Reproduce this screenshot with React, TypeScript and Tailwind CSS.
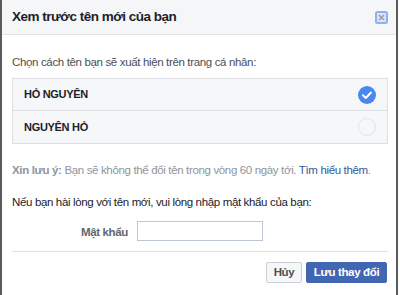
import React from "react";

export default function App() {
  return (
    <div
      className="w-[400px] h-[295px] bg-white overflow-hidden"
      style={{ fontFamily: '"Liberation Sans", Arial, sans-serif' }}
    >
      <div className="w-[398px] h-[295px] border-l-2 border-r-2 border-[#5b5b5b] bg-white flex flex-col">
        {/* Header */}
        <div className="h-[35px] shrink-0 bg-[#f5f6f7] border-b border-[#e5e5e5] flex items-center justify-between pl-[10px] pr-[8px]">
          <span className="text-[13.5px] tracking-[-0.5px] font-bold text-[#1d2129] leading-none">
            Xem trước tên mới của bạn
          </span>
          <svg width="13" height="13" viewBox="0 0 13 13" className="block">
            <rect x="1" y="1" width="11" height="11" rx="1.5" fill="#dfe3ea" stroke="#8db0f6" strokeWidth="2" />
            <path d="M4 4 L9 9 M9 4 L4 9" stroke="#9a9ea6" strokeWidth="1.5" />
          </svg>
        </div>

        {/* Body */}
        <div className="flex flex-col pl-[10px] pr-[8px] pt-[19px] text-[11.5px] tracking-[-0.35px]">
          <div className="leading-[16px] text-[#4b4f56] whitespace-nowrap">
            Chọn cách tên bạn sẽ xuất hiện trên trang cá nhân:
          </div>

          <div className="mt-[8px] border border-[#dddfe2] bg-[#f6f7f9]">
            <div className="h-[32px] flex items-center justify-between pl-[11px] pr-[11px] border-b border-[#dddfe2]">
              <span className="text-[11px] tracking-[-0.3px] font-bold text-[#1d2129]">HỎ NGUYÊN</span>
              <svg width="18" height="18" viewBox="0 0 18 18" className="block">
                <circle cx="9" cy="9" r="9" fill="#4a88f0" />
                <path d="M5 9.3 L7.8 12 L13 6.5" fill="none" stroke="#ffffff" strokeWidth="2" strokeLinecap="round" strokeLinejoin="round" />
              </svg>
            </div>
            <div className="h-[32px] flex items-center justify-between pl-[11px] pr-[11px]">
              <span className="text-[11px] tracking-[-0.3px] font-bold text-[#1d2129]">NGUYÊN HỎ</span>
              <div className="w-[18px] h-[18px] rounded-full border border-[#e1e3e6] bg-[#f6f7f9]" />
            </div>
          </div>

          <div className="mt-[18px] leading-[16px] text-[#90949c] whitespace-nowrap">
            <span className="font-bold">Xin lưu ý:</span> Bạn sẽ không thể đổi tên trong vòng 60 ngày tới.{" "}
            <span className="text-[#365899]">Tìm hiểu thêm</span>.
          </div>

          <div className="mt-[16px] leading-[16px] text-[#1d2129] whitespace-nowrap">
            Nếu bạn hài lòng với tên mới, vui lòng nhập mật khẩu của bạn:
          </div>

          <div className="mt-[11px] flex items-center">
            <div className="w-[116px] text-right font-bold text-[#606770] pt-[3px]">Mật khẩu</div>
            <input
              type="password"
              className="ml-[9px] w-[126px] h-[20px] border border-[#bdc7d8] bg-white outline-none"
            />
          </div>

          <div className="mt-[10px] h-px bg-[#dddfe2]" />

          <div className="mt-[10px] flex justify-end gap-[4px] pr-[1px]">
            <button className="h-[21px] w-[36px] border border-[#ccd0d5] bg-[#f6f7f9] rounded-[2px] font-bold text-[#4b4f56] leading-none flex items-center justify-center">
              Hủy
            </button>
            <button className="h-[21px] w-[81px] border border-[#4267b2] bg-[#4267b2] rounded-[2px] font-bold text-white leading-none flex items-center justify-center">
              Lưu thay đổi
            </button>
          </div>
        </div>
      </div>
    </div>
  );
}
